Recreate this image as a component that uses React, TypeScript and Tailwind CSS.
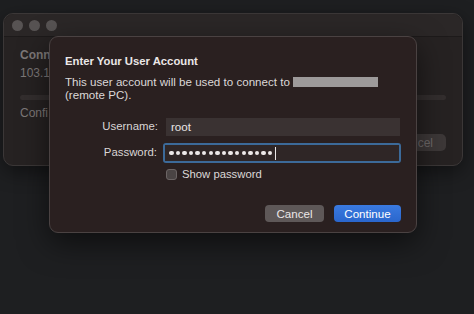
const DOTS = 16;

function TrafficLights() {
  return (
    <div className="flex items-center gap-[6px] pl-[8px] pt-[6px]">
      <span className="block h-[11px] w-[11px] rounded-full bg-[#575353]" />
      <span className="block h-[11px] w-[11px] rounded-full bg-[#575353]" />
      <span className="block h-[11px] w-[11px] rounded-full bg-[#575353]" />
    </div>
  );
}

function BackWindow() {
  return (
    <div className="absolute left-[3px] top-[13px] h-[153px] w-[460px] rounded-[10px] border border-[#3b3737] bg-[#262222] shadow-[0_6px_20px_rgba(0,0,0,0.45)]">
      <div className="h-[23px] border-b border-[#1d1a1a] bg-[#2b2727] rounded-t-[10px]">
        <TrafficLights />
      </div>
      {/* only the part left of the sheet is visible */}
      <div className="pl-[16px] pt-[10px] text-[12px] text-[#7d7878]">
        <div className="w-[29px] overflow-hidden whitespace-nowrap font-bold leading-[16px]">Conn</div>
        <div className="mt-[2px] w-[29px] overflow-hidden whitespace-nowrap leading-[16px]">103.14</div>
        <div className="mt-[14px] h-[5px] w-[426px] rounded-full bg-[#332e2e]" />
        <div className="mt-[5px] w-[29px] overflow-hidden whitespace-nowrap leading-[16px]">Confi</div>
      </div>
      <div className="absolute right-[16px] top-[120px] flex h-[17px] w-[31px] items-center justify-end overflow-hidden whitespace-nowrap rounded-r-[5px] bg-[#3d3838] pr-[13px] text-[12px] text-[#6e6969]">
        cel
      </div>
    </div>
  );
}

function Field({ label, children }: { label: string; children: React.ReactNode }) {
  return (
    <div className="flex items-center">
      <div className="w-[101px] pr-[8px] text-right text-[11.4px] text-[#d9d5d5]">{label}</div>
      {children}
    </div>
  );
}

export default function App() {
  return (
    <div
      className="relative h-[314px] w-[474px] overflow-hidden bg-[#1e1f21]"
      style={{ fontFamily: '"Liberation Sans", Arial, sans-serif' }}
    >
      <BackWindow />

      <div className="absolute left-[49px] top-[36px] h-[197px] w-[368px] rounded-[9px] border border-[#4a4242] bg-[#2a2020] pl-[15px] pr-[15px] pt-[16px] shadow-[0_10px_30px_rgba(0,0,0,0.55)]">
        <div className="text-[11.3px] font-bold leading-[16px] text-[#ebe7e7]">Enter Your User Account</div>
        <div className="mt-[6px] text-[11.6px] leading-[13px] text-[#dcd8d8]">
          <div className="flex items-center">
            This user account will be used to connect to
            <span className="ml-[3px] inline-block h-[10px] w-[85px] bg-[#9d9a9a]" />
          </div>
          <div>(remote PC).</div>
        </div>

        <div className="mt-[17px] flex flex-col gap-[7px]">
          <Field label="Username:">
            <div className="flex h-[18px] w-[234px] items-center bg-[#3a3232] pl-[5px] text-[11.6px] text-[#e8e4e4]">
              root
            </div>
          </Field>
          <Field label="Password:">
            <div className="ml-[-2px] rounded-[3px] border-[2px] border-[#3c6a99] p-0">
              <div className="flex h-[16px] w-[234px] items-center bg-[#2f2626] pl-[4px]">
                {Array.from({ length: DOTS }).map((_, i) => (
                  <span key={i} className="mr-[2.1px] block h-[4.5px] w-[4.5px] rounded-full bg-[#ece9e9]" />
                ))}
                <span className="block h-[13px] w-[1px] bg-[#e9e6e6]" />
              </div>
            </div>
          </Field>
          <div className="mt-[-1px] flex h-[11px] items-center pl-[101px]">
            <span className="block h-[11px] w-[11px] rounded-[3px] border border-[#6b6464] bg-[#4a4444]" />
            <span className="ml-[5px] text-[11.3px] text-[#dcd8d8]">Show password</span>
          </div>
        </div>

        <div className="mt-[25px] flex justify-end gap-[10px]">
          <button className="flex h-[17px] w-[59px] items-center justify-center rounded-[4px] bg-[#5e5858] text-[11.6px] text-[#ebe7e7]">
            Cancel
          </button>
          <button className="flex h-[17px] w-[67px] items-center justify-center rounded-[4px] bg-gradient-to-b from-[#3a7ae0] to-[#2a66cc] text-[11.6px] text-white">
            Continue
          </button>
        </div>
      </div>
    </div>
  );
}
